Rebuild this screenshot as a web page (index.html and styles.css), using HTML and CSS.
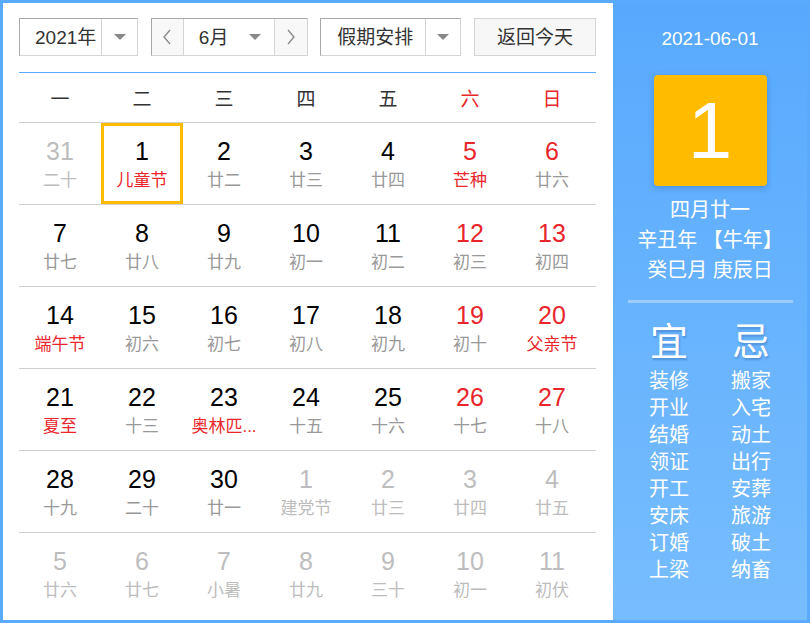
FILE: index.html
```html
<!DOCTYPE html>
<html>
<head>
    <title>万年历</title>
    <link rel="stylesheet" href="styles.css">
</head>
<body>
    <div class="calendar">
        <div class="cal-main">
            <div class="toolbar">
                <div class="select year-select">
                    <span class="select-text">2021年</span>
                    <span class="select-arrow"></span>
                </div>
                <div class="month-picker">
                    <span class="nav-btn">
                        <svg width="10" height="16" viewBox="0 0 10 16"><polyline points="8,1 2,8 8,15" fill="none" stroke="#888" stroke-width="1.3"/></svg>
                    </span>
                    <div class="month-select">
                        <span class="select-text">6月</span>
                        <span class="select-arrow"></span>
                    </div>
                    <span class="nav-btn">
                        <svg width="10" height="16" viewBox="0 0 10 16"><polyline points="2,1 8,8 2,15" fill="none" stroke="#888" stroke-width="1.3"/></svg>
                    </span>
                </div>
                <div class="select holiday-select">
                    <span class="select-text">假期安排</span>
                    <span class="select-arrow"></span>
                </div>
                <button class="today-btn">返回今天</button>
            </div>

            <div class="weekdays">
                <span>一</span><span>二</span><span>三</span><span>四</span><span>五</span>
                <span class="red">六</span><span class="red">日</span>
            </div>

            <div class="days">
                <div class="day other"><b>31</b><i>二十</i></div>
                <div class="day selected"><b>1</b><i class="red">儿童节</i></div>
                <div class="day"><b>2</b><i>廿二</i></div>
                <div class="day"><b>3</b><i>廿三</i></div>
                <div class="day"><b>4</b><i>廿四</i></div>
                <div class="day weekend"><b>5</b><i class="red">芒种</i></div>
                <div class="day weekend"><b>6</b><i>廿六</i></div>

                <div class="day"><b>7</b><i>廿七</i></div>
                <div class="day"><b>8</b><i>廿八</i></div>
                <div class="day"><b>9</b><i>廿九</i></div>
                <div class="day"><b>10</b><i>初一</i></div>
                <div class="day"><b>11</b><i>初二</i></div>
                <div class="day weekend"><b>12</b><i>初三</i></div>
                <div class="day weekend"><b>13</b><i>初四</i></div>

                <div class="day"><b>14</b><i class="red">端午节</i></div>
                <div class="day"><b>15</b><i>初六</i></div>
                <div class="day"><b>16</b><i>初七</i></div>
                <div class="day"><b>17</b><i>初八</i></div>
                <div class="day"><b>18</b><i>初九</i></div>
                <div class="day weekend"><b>19</b><i>初十</i></div>
                <div class="day weekend"><b>20</b><i class="red">父亲节</i></div>

                <div class="day"><b>21</b><i class="red">夏至</i></div>
                <div class="day"><b>22</b><i>十三</i></div>
                <div class="day"><b>23</b><i class="red">奥林匹...</i></div>
                <div class="day"><b>24</b><i>十五</i></div>
                <div class="day"><b>25</b><i>十六</i></div>
                <div class="day weekend"><b>26</b><i>十七</i></div>
                <div class="day weekend"><b>27</b><i>十八</i></div>

                <div class="day"><b>28</b><i>十九</i></div>
                <div class="day"><b>29</b><i>二十</i></div>
                <div class="day"><b>30</b><i>廿一</i></div>
                <div class="day other"><b>1</b><i>建党节</i></div>
                <div class="day other"><b>2</b><i>廿三</i></div>
                <div class="day other"><b>3</b><i>廿四</i></div>
                <div class="day other"><b>4</b><i>廿五</i></div>

                <div class="day other last"><b>5</b><i>廿六</i></div>
                <div class="day other last"><b>6</b><i>廿七</i></div>
                <div class="day other last"><b>7</b><i>小暑</i></div>
                <div class="day other last"><b>8</b><i>廿九</i></div>
                <div class="day other last"><b>9</b><i>三十</i></div>
                <div class="day other last"><b>10</b><i>初一</i></div>
                <div class="day other last"><b>11</b><i>初伏</i></div>
            </div>
        </div>

        <div class="cal-side">
            <div class="side-date">2021-06-01</div>
            <div class="side-day">1</div>
            <div class="side-lunar">
                <p>四月廿一</p>
                <p>辛丑年 【牛年】</p>
                <p>癸巳月 庚辰日</p>
            </div>
            <div class="side-line"></div>
            <div class="almanac">
                <div class="almanac-col">
                    <h3>宜</h3>
                    <p>装修</p><p>开业</p><p>结婚</p><p>领证</p>
                    <p>开工</p><p>安床</p><p>订婚</p><p>上梁</p>
                </div>
                <div class="almanac-col">
                    <h3>忌</h3>
                    <p>搬家</p><p>入宅</p><p>动土</p><p>出行</p>
                    <p>安葬</p><p>旅游</p><p>破土</p><p>纳畜</p>
                </div>
            </div>
        </div>
    </div>
</body>
</html>
```
FILE: styles.css
```css
body {
    margin: 0;
    font-family: "Liberation Sans", "Noto Sans CJK SC", sans-serif;
    background: #fff;
}
.calendar {
    display: flex;
    width: 810px;
    height: 623px;
    box-sizing: border-box;
    border: 3px solid #5aaafe;
}
.cal-main {
    width: 610px;
    padding: 15px 17px 0 16px;
    box-sizing: border-box;
    background: #fff;
}
.toolbar {
    display: flex;
    justify-content: space-between;
    height: 38px;
    margin-bottom: 16px;
}
.select, .month-picker {
    display: flex;
    align-items: center;
    box-sizing: border-box;
    height: 38px;
    border: 1px solid #a8a8a8;
    border-bottom-color: #d4d4d4;
    border-right-color: #d4d4d4;
    color: #333;
    font-size: 19px;
}
.select-text {
    flex: 1;
    padding-top: 2px;
    line-height: 34px;
}
.select-arrow {
    width: 0;
    height: 0;
    border-left: 6px solid transparent;
    border-right: 6px solid transparent;
    border-top: 6px solid #888;
}
.year-select {
    width: 119px;
}
.year-select .select-text {
    padding-left: 15px;
    border-right: 1px solid #d4d4d4;
}
.year-select .select-arrow {
    margin: 0 11px 0 12px;
}
.month-picker {
    width: 157px;
}
.nav-btn {
    display: flex;
    align-items: center;
    justify-content: center;
    width: 32px;
    height: 36px;
    background: #f8f8f8;
}
.month-select {
    display: flex;
    align-items: center;
    width: 93px;
    height: 36px;
    border-left: 1px solid #d4d4d4;
    border-right: 1px solid #d4d4d4;
    background: #fff;
}
.month-select .select-text {
    padding-left: 15px;
}
.month-select .select-arrow {
    margin-right: 13px;
}
.holiday-select {
    width: 141px;
}
.holiday-select .select-text {
    padding-left: 16px;
    border-right: 1px solid #d4d4d4;
}
.holiday-select .select-arrow {
    margin: 0 11px 0 11px;
}
.today-btn {
    width: 122px;
    height: 38px;
    padding: 0 0 3px;
    border: 1px solid #d4d4d4;
    background: #f7f7f7;
    color: #333;
    font-family: inherit;
    font-size: 19px;
}
.weekdays {
    display: grid;
    grid-template-columns: repeat(6, 82px) 1fr;
    height: 49px;
    border-top: 1px solid #5aaafe;
    border-bottom: 1px solid #cfcfcf;
    align-items: center;
    text-align: center;
    font-size: 19px;
    color: #333;
}
.weekdays span:last-child {
    padding-right: 3px;
}
.red {
    color: #e8262b;
}
.days {
    display: grid;
    grid-template-columns: repeat(6, 82px) 1fr;
}
.day {
    display: flex;
    flex-direction: column;
    align-items: center;
    height: 82px;
    padding-top: 14px;
    box-sizing: border-box;
    border-bottom: 1px solid #cfcfcf;
}
.day:nth-child(7n) {
    padding-right: 3px;
}
.day.last {
    border-bottom: none;
}
.day b {
    font-weight: normal;
    font-size: 25px;
    line-height: 28px;
    color: #000;
}
.day i {
    font-style: normal;
    font-size: 17px;
    line-height: 32px;
    color: #999;
    white-space: nowrap;
}
.day.weekend b {
    color: #e8262b;
}
.day i.red {
    color: #e8262b;
}
.day.other b, .day.other i {
    color: #bdbdbd;
}
.day.selected {
    box-shadow: inset 0 0 0 3px #ffbb00;
}
.cal-side {
    flex: 1;
    padding-top: 24px;
    background: linear-gradient(180deg, #58a9fe, #77bdfe);
    color: #fff;
    text-align: center;
}
.side-date {
    font-size: 19px;
    line-height: 24px;
}
.side-day {
    width: 113px;
    height: 111px;
    margin: 24px auto 0;
    border-radius: 4px;
    background: #ffbb00;
    box-shadow: 0 2px 6px rgba(40, 90, 160, 0.35);
    font-size: 80px;
    line-height: 111px;
}
.side-lunar {
    margin-top: 9px;
}
.side-lunar p {
    margin: 0;
    font-size: 20px;
    line-height: 30px;
}
.side-line {
    height: 3px;
    margin: 15px 14px 0 15px;
    background: rgba(255, 255, 255, 0.35);
}
.almanac {
    display: flex;
    justify-content: center;
    gap: 22px;
    margin-top: 17px;
}
.almanac-col {
    width: 60px;
}
.almanac-col h3 {
    margin: 0 0 4px;
    font-size: 38px;
    font-weight: normal;
    line-height: 44px;
    text-shadow: 1px 2px 2px rgba(30, 80, 150, 0.35);
}
.almanac-col p {
    margin: 0;
    font-size: 20px;
    line-height: 27px;
}
```
